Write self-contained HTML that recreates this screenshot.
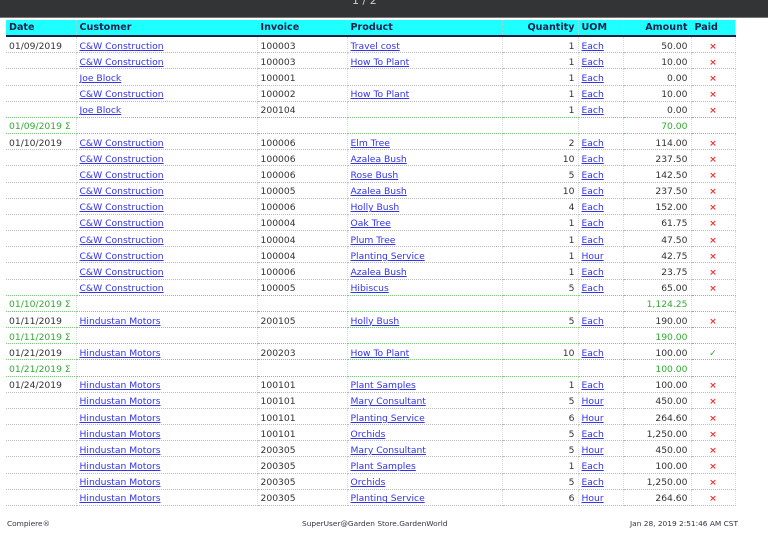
<!DOCTYPE html>
<html><head><meta charset="utf-8"><style>
body{margin:0;width:768px;height:552px;background:#fff;overflow:hidden;font-family:"DejaVu Sans","Liberation Sans",sans-serif;position:relative}
.bar{position:absolute;left:0;top:0;width:768px;height:17px;background:#323436;border-bottom:1px solid #777}
.bar span{position:absolute;left:352px;top:-6px;color:#ccc;font-size:11px}
table{position:absolute;left:6px;top:20px;border-collapse:collapse;table-layout:fixed;width:729px;font-size:9.2px;color:#333}
th{background:#1effff;color:#1a1f4a;font-weight:bold;text-align:left;height:15px;padding:0 3px;border-bottom:2px solid #1a1f4a;border-right:1px dotted #ccc;white-space:nowrap;font-size:9.6px}
td{height:12.18px;padding:3px 3px 0;border-bottom:1px dotted #bbb;border-right:1px dotted #ddd;white-space:nowrap;overflow:hidden}
a{color:#3333ee;text-decoration:underline}
.r{text-align:right}
.x{color:#e33;text-align:center;font-weight:bold}
.ok{color:#3a3;text-align:center}
tr.s td{color:#3a3;border-bottom:1px dotted #7c7}
tr.p td{border-bottom:1px dotted #7c7}
.f{position:absolute;top:519px;font-size:7.4px;color:#334}
</style></head><body>
<div class="bar"><span>1 / 2</span></div>
<table>
<colgroup><col style="width:70px"><col style="width:181px"><col style="width:90px"><col style="width:155px"><col style="width:76px"><col style="width:45px"><col style="width:68px"><col style="width:44px"></colgroup>
<tr><th>Date</th><th>Customer</th><th>Invoice</th><th>Product</th><th class="r">Quantity</th><th>UOM</th><th class="r">Amount</th><th>Paid</th></tr>
<tr><td>01/09/2019</td><td><a>C&amp;W Construction</a></td><td>100003</td><td><a>Travel cost</a></td><td class="r">1</td><td><a>Each</a></td><td class="r">50.00</td><td class="x">×</td></tr>
<tr><td></td><td><a>C&amp;W Construction</a></td><td>100003</td><td><a>How To Plant</a></td><td class="r">1</td><td><a>Each</a></td><td class="r">10.00</td><td class="x">×</td></tr>
<tr><td></td><td><a>Joe Block</a></td><td>100001</td><td></td><td class="r">1</td><td><a>Each</a></td><td class="r">0.00</td><td class="x">×</td></tr>
<tr><td></td><td><a>C&amp;W Construction</a></td><td>100002</td><td><a>How To Plant</a></td><td class="r">1</td><td><a>Each</a></td><td class="r">10.00</td><td class="x">×</td></tr>
<tr class="p"><td></td><td><a>Joe Block</a></td><td>200104</td><td></td><td class="r">1</td><td><a>Each</a></td><td class="r">0.00</td><td class="x">×</td></tr>
<tr class="s"><td>01/09/2019 Σ</td><td></td><td></td><td></td><td></td><td></td><td class="r">70.00</td><td></td></tr>
<tr><td>01/10/2019</td><td><a>C&amp;W Construction</a></td><td>100006</td><td><a>Elm Tree</a></td><td class="r">2</td><td><a>Each</a></td><td class="r">114.00</td><td class="x">×</td></tr>
<tr><td></td><td><a>C&amp;W Construction</a></td><td>100006</td><td><a>Azalea Bush</a></td><td class="r">10</td><td><a>Each</a></td><td class="r">237.50</td><td class="x">×</td></tr>
<tr><td></td><td><a>C&amp;W Construction</a></td><td>100006</td><td><a>Rose Bush</a></td><td class="r">5</td><td><a>Each</a></td><td class="r">142.50</td><td class="x">×</td></tr>
<tr><td></td><td><a>C&amp;W Construction</a></td><td>100005</td><td><a>Azalea Bush</a></td><td class="r">10</td><td><a>Each</a></td><td class="r">237.50</td><td class="x">×</td></tr>
<tr><td></td><td><a>C&amp;W Construction</a></td><td>100006</td><td><a>Holly Bush</a></td><td class="r">4</td><td><a>Each</a></td><td class="r">152.00</td><td class="x">×</td></tr>
<tr><td></td><td><a>C&amp;W Construction</a></td><td>100004</td><td><a>Oak Tree</a></td><td class="r">1</td><td><a>Each</a></td><td class="r">61.75</td><td class="x">×</td></tr>
<tr><td></td><td><a>C&amp;W Construction</a></td><td>100004</td><td><a>Plum Tree</a></td><td class="r">1</td><td><a>Each</a></td><td class="r">47.50</td><td class="x">×</td></tr>
<tr><td></td><td><a>C&amp;W Construction</a></td><td>100004</td><td><a>Planting Service</a></td><td class="r">1</td><td><a>Hour</a></td><td class="r">42.75</td><td class="x">×</td></tr>
<tr><td></td><td><a>C&amp;W Construction</a></td><td>100006</td><td><a>Azalea Bush</a></td><td class="r">1</td><td><a>Each</a></td><td class="r">23.75</td><td class="x">×</td></tr>
<tr class="p"><td></td><td><a>C&amp;W Construction</a></td><td>100005</td><td><a>Hibiscus</a></td><td class="r">5</td><td><a>Each</a></td><td class="r">65.00</td><td class="x">×</td></tr>
<tr class="s"><td>01/10/2019 Σ</td><td></td><td></td><td></td><td></td><td></td><td class="r">1,124.25</td><td></td></tr>
<tr class="p"><td>01/11/2019</td><td><a>Hindustan Motors</a></td><td>200105</td><td><a>Holly Bush</a></td><td class="r">5</td><td><a>Each</a></td><td class="r">190.00</td><td class="x">×</td></tr>
<tr class="s"><td>01/11/2019 Σ</td><td></td><td></td><td></td><td></td><td></td><td class="r">190.00</td><td></td></tr>
<tr class="p"><td>01/21/2019</td><td><a>Hindustan Motors</a></td><td>200203</td><td><a>How To Plant</a></td><td class="r">10</td><td><a>Each</a></td><td class="r">100.00</td><td class="ok">✓</td></tr>
<tr class="s"><td>01/21/2019 Σ</td><td></td><td></td><td></td><td></td><td></td><td class="r">100.00</td><td></td></tr>
<tr><td>01/24/2019</td><td><a>Hindustan Motors</a></td><td>100101</td><td><a>Plant Samples</a></td><td class="r">1</td><td><a>Each</a></td><td class="r">100.00</td><td class="x">×</td></tr>
<tr><td></td><td><a>Hindustan Motors</a></td><td>100101</td><td><a>Mary Consultant</a></td><td class="r">5</td><td><a>Hour</a></td><td class="r">450.00</td><td class="x">×</td></tr>
<tr><td></td><td><a>Hindustan Motors</a></td><td>100101</td><td><a>Planting Service</a></td><td class="r">6</td><td><a>Hour</a></td><td class="r">264.60</td><td class="x">×</td></tr>
<tr><td></td><td><a>Hindustan Motors</a></td><td>100101</td><td><a>Orchids</a></td><td class="r">5</td><td><a>Each</a></td><td class="r">1,250.00</td><td class="x">×</td></tr>
<tr><td></td><td><a>Hindustan Motors</a></td><td>200305</td><td><a>Mary Consultant</a></td><td class="r">5</td><td><a>Hour</a></td><td class="r">450.00</td><td class="x">×</td></tr>
<tr><td></td><td><a>Hindustan Motors</a></td><td>200305</td><td><a>Plant Samples</a></td><td class="r">1</td><td><a>Each</a></td><td class="r">100.00</td><td class="x">×</td></tr>
<tr><td></td><td><a>Hindustan Motors</a></td><td>200305</td><td><a>Orchids</a></td><td class="r">5</td><td><a>Each</a></td><td class="r">1,250.00</td><td class="x">×</td></tr>
<tr><td></td><td><a>Hindustan Motors</a></td><td>200305</td><td><a>Planting Service</a></td><td class="r">6</td><td><a>Hour</a></td><td class="r">264.60</td><td class="x">×</td></tr>
</table>
<div class="f" style="left:7px">Compiere®</div>
<div class="f" style="left:302px">SuperUser@Garden Store.GardenWorld</div>
<div class="f" style="left:630px">Jan 28, 2019 2:51:46 AM CST</div>
</body></html>
